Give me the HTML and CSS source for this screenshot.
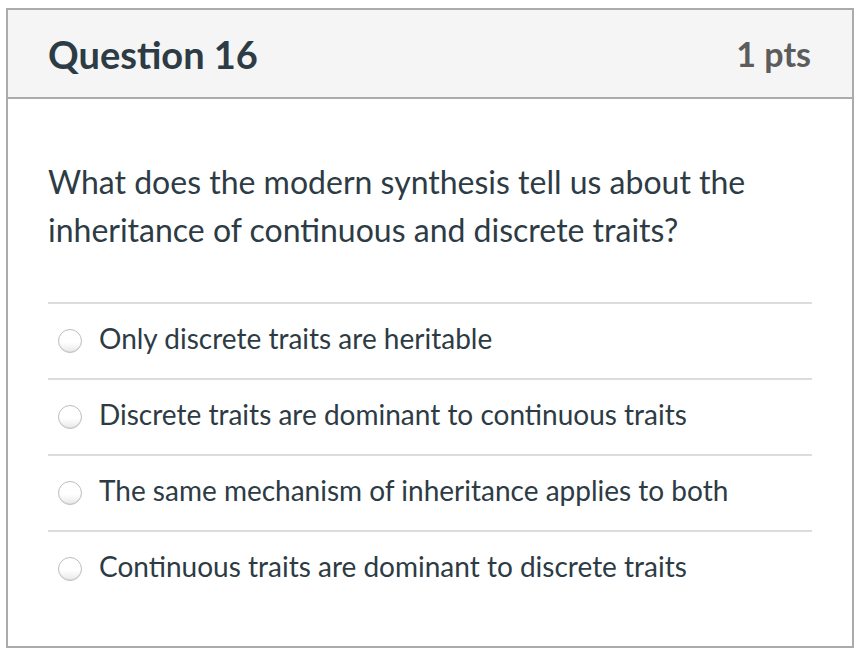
FILE: index.html
```html
<!DOCTYPE html>
<html lang="en">
<head>
<meta charset="utf-8">
<title>Question 16</title>
<link rel="stylesheet" href="styles.css">
</head>
<body>
<div class="page">
  <section class="question">
    <header class="question-header">
      <h2 class="question-title">Question 16</h2>
      <span class="question-points">1 pts</span>
    </header>
    <div class="question-body">
      <p class="question-text">What does the modern synthesis tell us about the inheritance of continuous and discrete traits?</p>
      <div class="answers">
        <label class="answer"><span class="radio"></span><span class="answer-text">Only discrete traits are heritable</span></label>
        <label class="answer"><span class="radio"></span><span class="answer-text">Discrete traits are dominant to continuous traits</span></label>
        <label class="answer"><span class="radio"></span><span class="answer-text">The same mechanism of inheritance applies to both</span></label>
        <label class="answer"><span class="radio"></span><span class="answer-text">Continuous traits are dominant to discrete traits</span></label>
      </div>
    </div>
  </section>
</div>
</body>
</html>
```

FILE: styles.css
```css
html, body {
  margin: 0;
  padding: 0;
  background: #ffffff;
}

body {
  font-family: Lato, "Liberation Sans", sans-serif;
  color: #2d3b45;
}

.page {
  padding: 8px 10px 12px 6px;
}

.question {
  width: 848px;
  height: 640px;
  box-sizing: border-box;
  border: 2px solid #ababab;
  background: #ffffff;
}

.question-header {
  height: 89px;
  box-sizing: border-box;
  background: #f5f5f5;
  border-bottom: 2px solid #ababab;
  display: flex;
  align-items: center;
  justify-content: space-between;
  padding: 0 41px 0 40px;
}

.question-title {
  margin: 0;
  font-size: 38px;
  font-weight: 700;
  color: #2d3b45;
}

.question-points {
  font-size: 34px;
  font-weight: 700;
  color: #5c5c5c;
}

.question-body {
  padding: 59px 40px 0 40px;
}

.question-text {
  margin: 0 0 48px 0;
  font-size: 32px;
  line-height: 48px;
  color: #2d3b45;
}

.answers {
  width: 764px;
}

.answer {
  display: flex;
  align-items: center;
  height: 76px;
  box-sizing: border-box;
  border-top: 2px solid #dcdcdc;
  padding-left: 10px;
}

.radio {
  width: 24px;
  height: 24px;
  box-sizing: border-box;
  border-radius: 50%;
  border: 1px solid #bdbdbd;
  background: linear-gradient(#ffffff 0%, #ffffff 55%, #e9e9e9 100%);
  box-shadow: inset 0 -1px 1px rgba(0, 0, 0, 0.06);
  margin-bottom: 1px;
  flex: none;
}

.answer-text {
  margin-left: 17px;
  margin-bottom: 7px;
  font-size: 28px;
  color: #2d3b45;
}
```
